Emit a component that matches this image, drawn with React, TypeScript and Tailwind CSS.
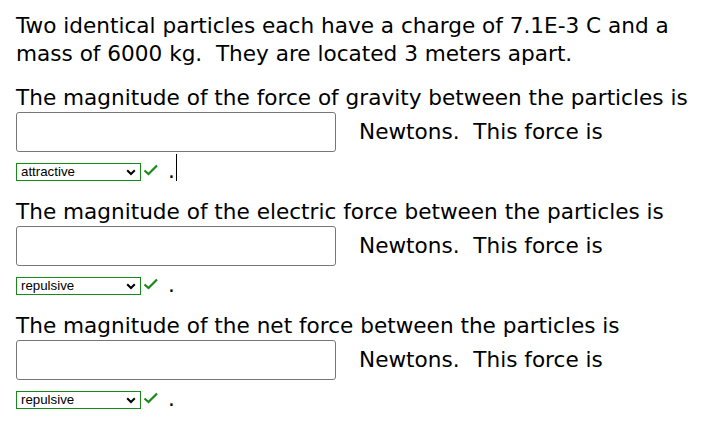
import React from "react";

const font = { fontFamily: '"DejaVu Sans", Tahoma, sans-serif' };

function Check() {
  return (
    <svg width="16" height="13" viewBox="0 0 16 13" className="ml-[2px] self-start mt-[1px]">
      <path d="M1.5 6.5 L5.5 10 L14 1.5" fill="none" stroke="#178a17" strokeWidth="2.2" />
    </svg>
  );
}

function Block({ label, value, caret }: { label: string; value: string; caret?: boolean }) {
  return (
    <div>
      <div className="h-[27px] leading-[27px] text-[21.6px] text-black whitespace-nowrap">{label}</div>
      <div className="flex items-start mt-[1px]">
        <div className="w-[320px] h-[40px] border border-[#767676] rounded-[3px] bg-white" />
        <div className="ml-[23px] mt-[6px] text-[21.6px] leading-[27px] text-black whitespace-pre">Newtons.  This force is</div>
      </div>
      <div className="flex items-start mt-[11px] h-[18px]">
        <div
          className="w-[125px] h-[18px] border border-[#178a17] bg-white flex items-center justify-between pl-[4px] pr-[4px] text-[13.3px] text-black leading-none"
          style={{ fontFamily: '"Liberation Sans", Arial, sans-serif' }}
        >
          <span>{value}</span>
          <svg width="10" height="7" viewBox="0 0 10 7">
            <path d="M1.2 1.2 L5 5 L8.8 1.2" fill="none" stroke="#000" strokeWidth="2" />
          </svg>
        </div>
        <Check />
        <div className="relative ml-[9px] text-[21.6px] leading-[18px] text-black h-[18px]">
          <span className="relative top-[-1px]">.</span>
        </div>
        {caret && <div className="w-[1px] h-[27px] bg-black ml-[1px] mt-[-9px]" />}
      </div>
    </div>
  );
}

export default function App() {
  return (
    <div className="w-[717px] h-[428px] bg-white pl-[16px] pt-[12px]" style={font}>
      <div className="text-[21.6px] leading-[28px] text-black whitespace-pre">
        {"Two identical particles each have a charge of 7.1E-3 C and a\nmass of 6000 kg.  They are located 3 meters apart."}
      </div>
      <div className="mt-[16px] flex flex-col gap-[17px]">
        <Block label="The magnitude of the force of gravity between the particles is" value="attractive" caret />
        <Block label="The magnitude of the electric force between the particles is" value="repulsive" />
        <Block label="The magnitude of the net force between the particles is" value="repulsive" />
      </div>
    </div>
  );
}
